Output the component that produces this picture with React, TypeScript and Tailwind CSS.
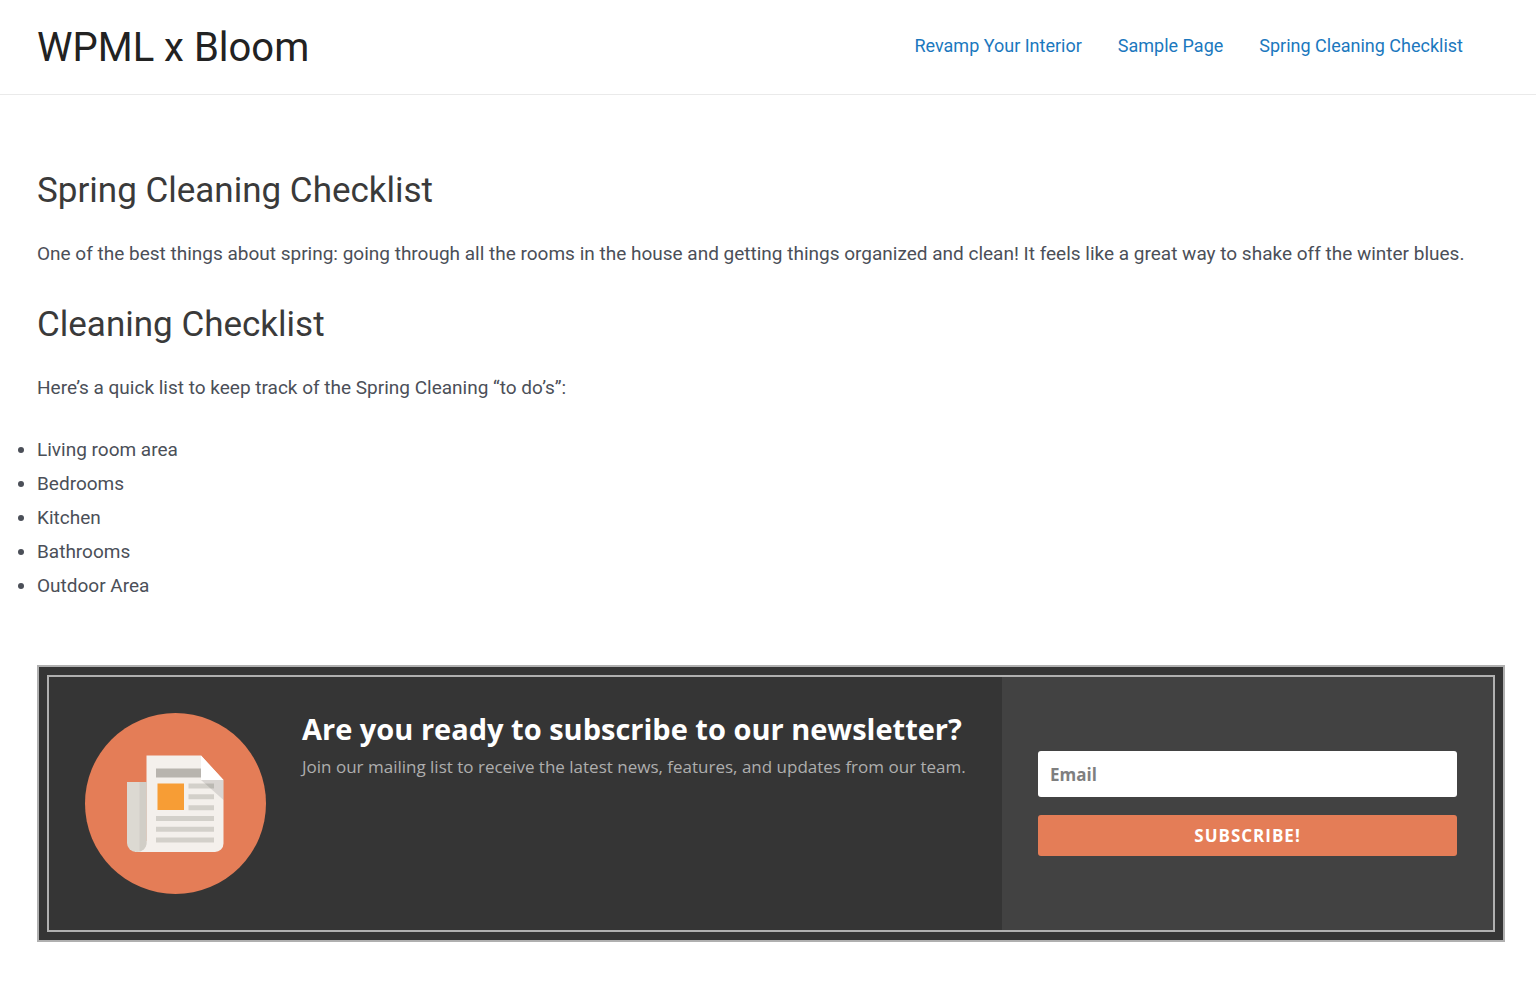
const nav = ["Revamp Your Interior", "Sample Page", "Spring Cleaning Checklist"];
const rooms = ["Living room area", "Bedrooms", "Kitchen", "Bathrooms", "Outdoor Area"];

function NewspaperIcon() {
  return (
    <svg viewBox="0 0 181 181" className="size-[181px] shrink-0" aria-hidden="true">
      <circle cx="90.5" cy="90.5" r="90.5" fill="#e47d57" />
      <path d="M61.5 42.5H116L138.500 67V130.500a8.500 8.500 0 0 1-8.500 8.500H50V128h11.500z" fill="#f4f0ec" />
      <path d="M42 69h19.500v61a9 9 0 0 1-9 9H51a9 9 0 0 1-9-9z" fill="#dcd9d2" />
      <path d="M54.500 69h7v61c0 4-3 7.500-7 8.500z" fill="#d1cec7" />
      <path d="M71 55.500h45v9H71z" fill="#b8b4ae" />
      <path d="M72.500 70.500h26.500v26.500H72.500z" fill="#f79d35" />
      <path
        d="M103.500 70.500h25.500v5h-25.500zM103.500 81.300h25.500v5h-25.500zM103.500 92.200h25.500v5h-25.500zM71 103h58v5H71zM71 113.800h58v5H71zM71 124.600h58v5H71z"
        fill="#d3d0ca"
      />
      <path d="M116 42.500V67h22.500z" fill="#fff" />
      <path d="M116 67h22.500v20z" fill="#000" fillOpacity="0.11" />
    </svg>
  );
}

export default function App() {
  return (
    <div className="min-h-screen bg-white font-['Roboto',sans-serif] text-[19px] text-[#4b4f58]">
      <header className="flex items-center justify-between border-b border-[#eaeaea] pt-[21px] pr-[73px] pb-[19px] pl-[37px]">
        <a href="#" className="text-[40px] leading-[54px] text-[#222]">WPML x Bloom</a>
        <nav className="flex gap-9 pb-1 text-lg text-[#1b78be]">
          {nav.map((item) => (
            <a key={item} href="#">{item}</a>
          ))}
        </nav>
      </header>
      <main className="px-[37px] pt-[72px]">
        <h1 className="text-[35px] leading-[48px] text-[#3a3a3a]">Spring Cleaning Checklist</h1>
        <p className="mt-[22px] leading-[34px]">
          One of the best things about spring: going through all the rooms in the house and getting things organized and clean! It feels like a great way to shake off the winter blues.
        </p>
        <h2 className="mt-[30px] text-[35px] leading-[48px] text-[#3a3a3a]">Cleaning Checklist</h2>
        <p className="mt-[22px] leading-[34px]">Here’s a quick list to keep track of the Spring Cleaning “to do’s”:</p>
        <ul className="mt-7 list-disc leading-[34px]">
          {rooms.map((room) => (
            <li key={room}>{room}</li>
          ))}
        </ul>
      </main>
      <section className="mt-[62px] mr-[31px] ml-[37px] border-2 border-[#b0b0b0] bg-[#353535] p-2 font-['Open_Sans',sans-serif]">
        <div className="flex border-2 border-[#b0b0b0]">
          <div className="flex flex-1 gap-9 py-9 pr-8 pl-9">
            <NewspaperIcon />
            <div>
              <h2 className="text-[29px] leading-8 font-bold text-white">Are you ready to subscribe to our newsletter?</h2>
              <p className="mt-1 text-[17px] leading-9 text-[#aeaeae]">
                Join our mailing list to receive the latest news, features, and updates from our team.
              </p>
            </div>
          </div>
          <form
            className="flex w-[34%] flex-col justify-center gap-[18px] bg-[#424242] px-9"
            onSubmit={(e) => e.preventDefault()}
          >
            <input
              type="email"
              aria-label="Email"
              placeholder="Email"
              className="h-[46px] rounded-[3px] bg-white px-3 text-[17px] font-bold placeholder:text-[#7f7f7f]"
            />
            <button className="h-[41px] rounded-[3px] bg-[#e47d57] text-[17px] font-bold tracking-[1px] text-white">SUBSCRIBE!</button>
          </form>
        </div>
      </section>
    </div>
  );
}
